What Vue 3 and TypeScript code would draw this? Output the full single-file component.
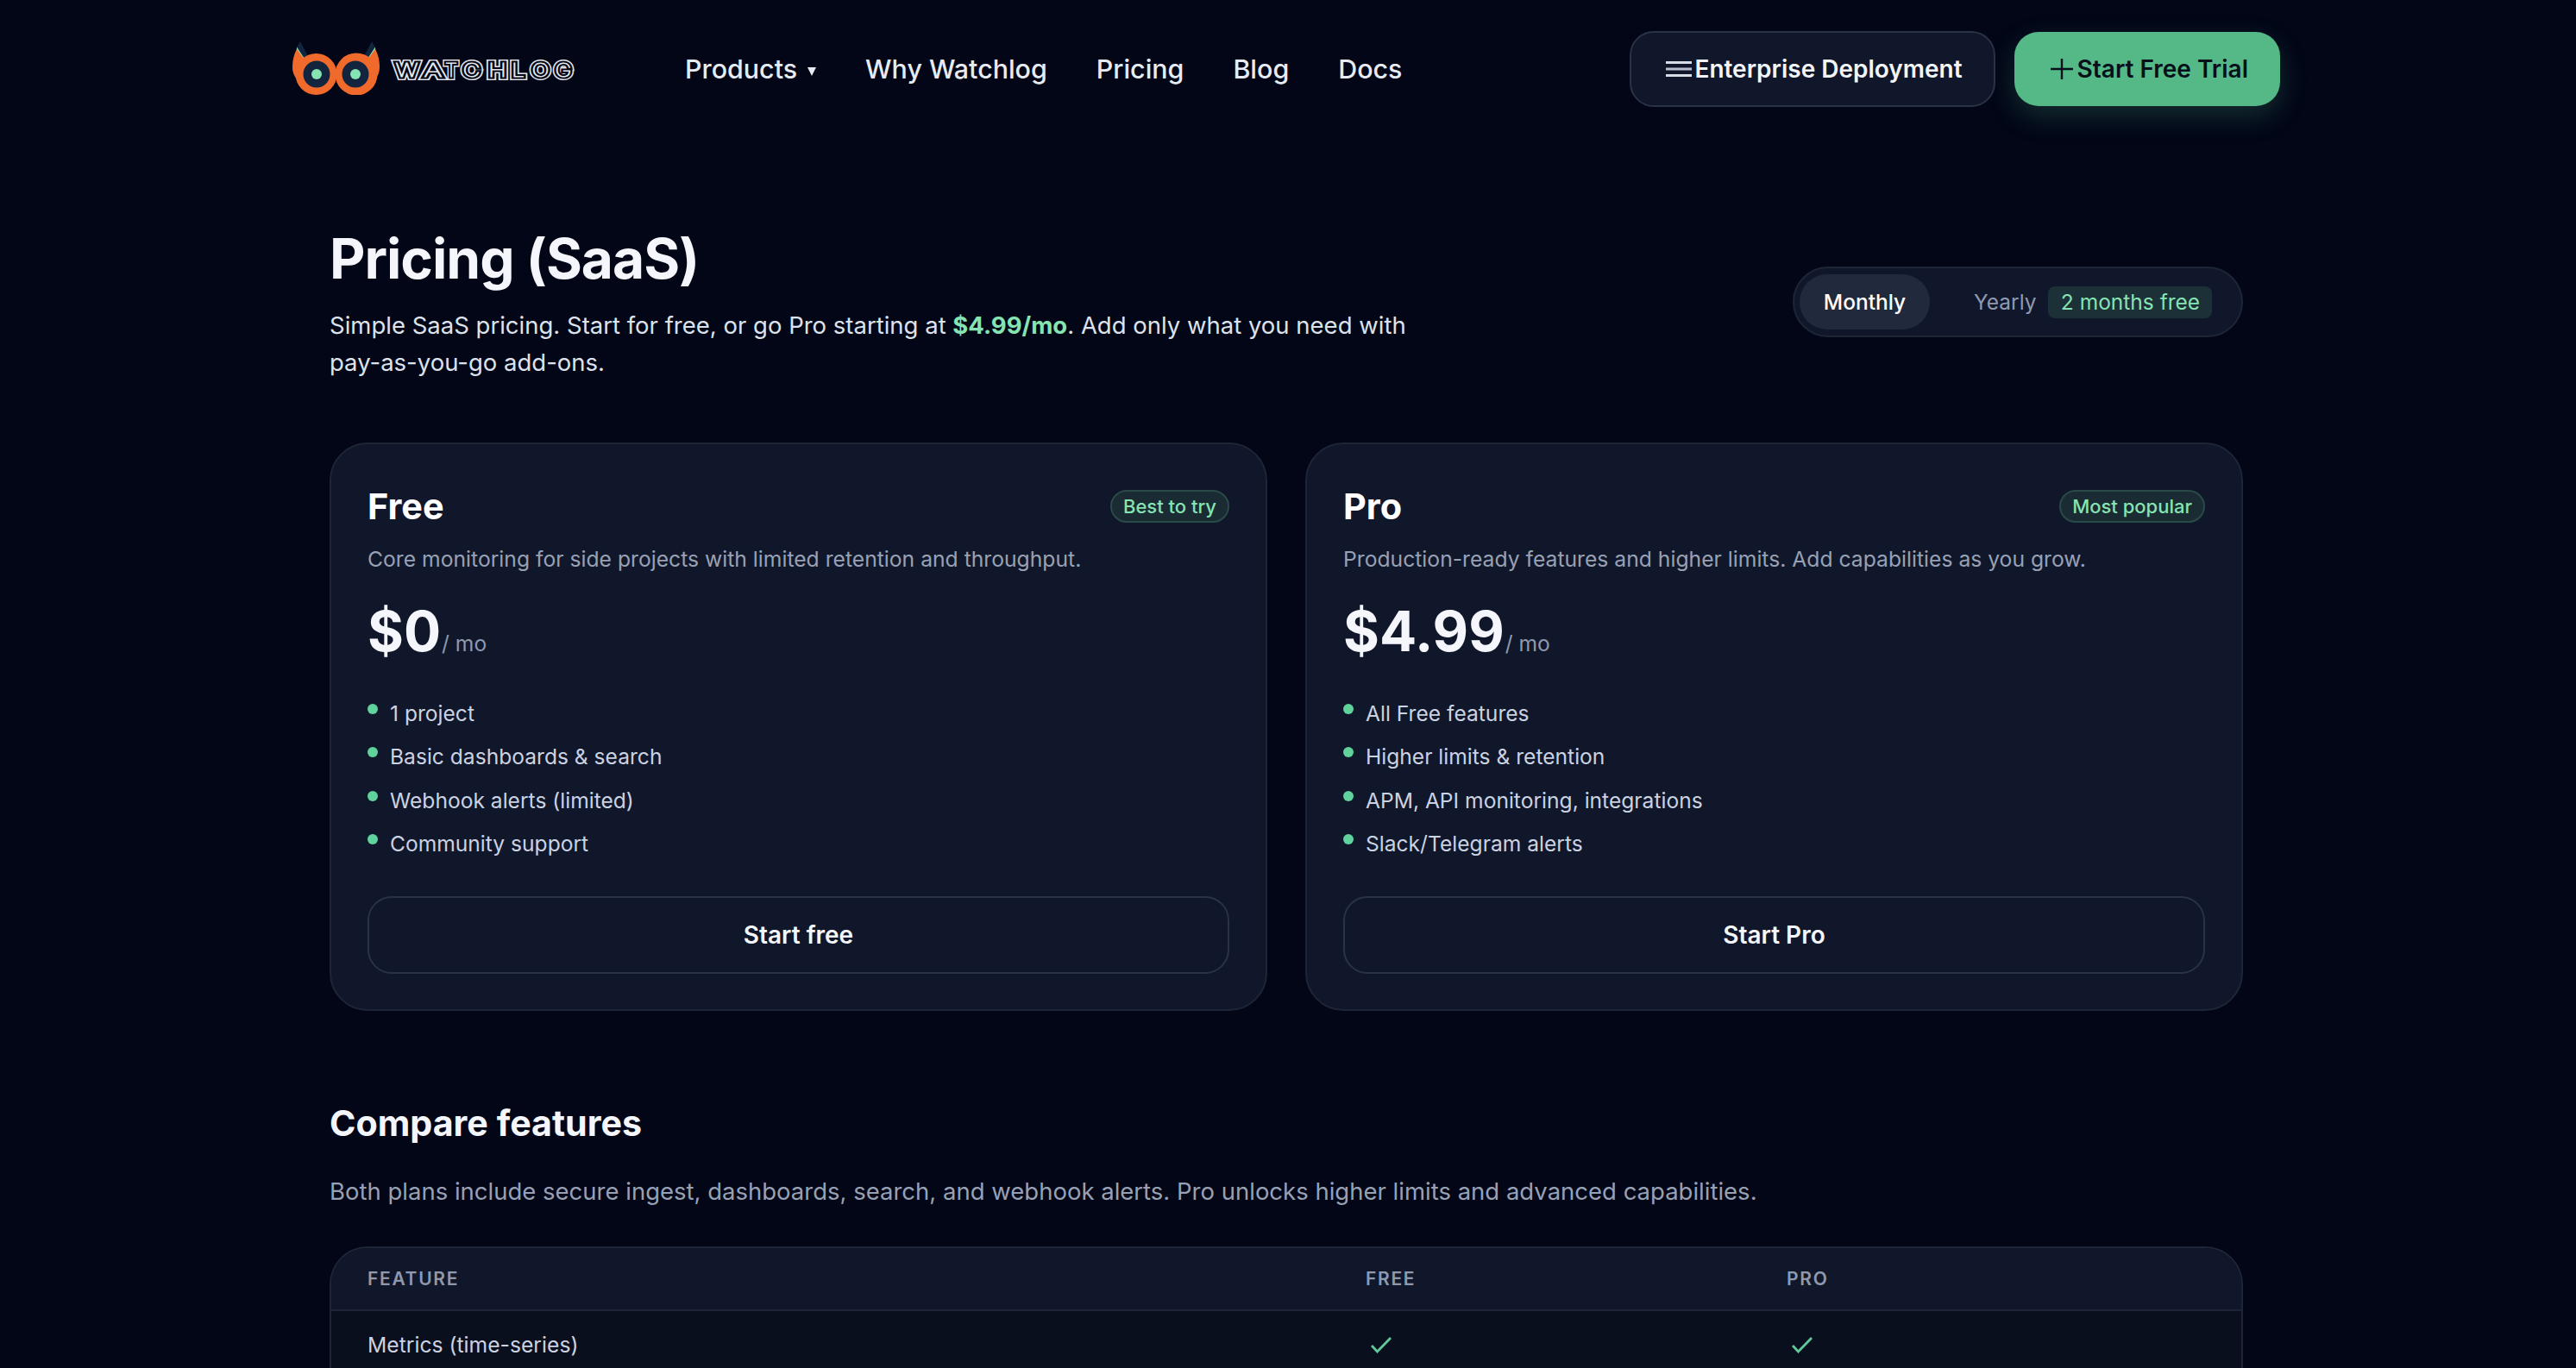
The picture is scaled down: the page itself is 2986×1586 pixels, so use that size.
<script setup lang="ts">
const navLinks = ['Why Watchlog', 'Pricing', 'Blog', 'Docs']

interface Plan {
  name: string
  badge: string
  desc: string
  price: string
  features: string[]
  cta: string
}

const plans: Plan[] = [
  {
    name: 'Free',
    badge: 'Best to try',
    desc: 'Core monitoring for side projects with limited retention and throughput.',
    price: '$0',
    features: ['1 project', 'Basic dashboards & search', 'Webhook alerts (limited)', 'Community support'],
    cta: 'Start free',
  },
  {
    name: 'Pro',
    badge: 'Most popular',
    desc: 'Production-ready features and higher limits. Add capabilities as you grow.',
    price: '$4.99',
    features: ['All Free features', 'Higher limits & retention', 'APM, API monitoring, integrations', 'Slack/Telegram alerts'],
    cta: 'Start Pro',
  },
]
</script>

<template>
  <div class="page">
    <header class="header">
      <div class="brand">
        <svg class="owl" viewBox="0 0 101 62" width="101" height="62" aria-hidden="true">
          <path d="M9 0 L18 17 L14 20 L5 7 Z" fill="#12243e" />
          <path d="M92 0 L83 17 L87 20 L96 7 Z" fill="#12243e" />
          <path d="M5 6.5 L14 20 L4 26 Z" fill="#86e3b2" />
          <path d="M96 6.5 L87 20 L97 26 Z" fill="#86e3b2" />
          <path d="M5 9 C1 16 0 24 0 30 C0 36 2 40 5 44 L14 21 Z" fill="#f06a2b" />
          <path d="M96 9 C100 16 101 24 101 30 C101 36 99 40 96 44 L87 21 Z" fill="#f06a2b" />
          <circle cx="27.5" cy="38" r="24" fill="#f06a2b" />
          <circle cx="74" cy="38" r="24.5" fill="#f06a2b" />
          <circle cx="28" cy="38" r="15.5" fill="#12243e" />
          <circle cx="73" cy="38" r="15.5" fill="#12243e" />
          <circle cx="28" cy="38" r="6" fill="#86e3b2" />
          <circle cx="73" cy="38" r="6" fill="#86e3b2" />
        </svg>
        <svg class="wordmark" viewBox="0 0 210 30" width="210" height="30" role="img" aria-label="Watchlog">
          <defs>
            <text id="wl" y="22.3" class="wm-text"><tspan x="4.5" textLength="26" lengthAdjust="spacingAndGlyphs">W</tspan><tspan x="37.5" textLength="21" lengthAdjust="spacingAndGlyphs">A</tspan><tspan x="62" textLength="14" lengthAdjust="spacingAndGlyphs">T</tspan><tspan x="82.5" textLength="20" lengthAdjust="spacingAndGlyphs">C</tspan><tspan x="112" textLength="21" lengthAdjust="spacingAndGlyphs">H</tspan><tspan x="139" textLength="15" lengthAdjust="spacingAndGlyphs">L</tspan><tspan x="162.5" textLength="20" lengthAdjust="spacingAndGlyphs">O</tspan><tspan x="189.5" textLength="19" lengthAdjust="spacingAndGlyphs">G</tspan></text>
          </defs>
          <use href="#wl" fill="none" stroke="#e4e6eb" stroke-width="8" />
          <use href="#wl" fill="none" stroke="#020617" stroke-width="5.2" />
          <use href="#wl" fill="#e4e6eb" stroke="#e4e6eb" stroke-width="1" />
        </svg>
      </div>
      <nav class="nav">
        <a class="nav-link">Products<svg class="caret" viewBox="0 0 10 10" width="10" height="10" aria-hidden="true"><path d="M0 0H10L5 10Z" fill="#e7ebf3" /></svg></a>
        <a v-for="link in navLinks" :key="link" class="nav-link">{{ link }}</a>
      </nav>
      <div class="actions">
        <button class="btn btn-ghost">
          <svg viewBox="0 0 30 18" width="30" height="18" aria-hidden="true">
            <path d="M0 1.5H30M0 16.5H30" stroke="#d8dce6" stroke-width="3" fill="none" />
            <path d="M0 9H30" stroke="#b9bfcd" stroke-width="3" fill="none" />
          </svg>
          Enterprise Deployment
        </button>
        <button class="btn btn-primary">
          <svg viewBox="0 0 26 24" width="26" height="24" aria-hidden="true">
            <path d="M0 12H26M13 0V24" stroke="#06101a" stroke-width="2.4" fill="none" />
          </svg>
          Start Free Trial
        </button>
      </div>
    </header>

    <main class="main">
      <section class="hero">
        <div class="hero-copy">
          <h1 class="title">Pricing (SaaS)</h1>
          <p class="lead">
            Simple SaaS pricing. Start for free, or go Pro starting at <strong class="accent">$4.99/mo</strong>. Add only what you need with pay-as-you-go add-ons.
          </p>
        </div>
        <div class="toggle">
          <span class="toggle-on">Monthly</span>
          <span class="toggle-off">Yearly</span>
          <span class="toggle-tag">2 months free</span>
        </div>
      </section>

      <section class="plans">
        <article v-for="plan in plans" :key="plan.name" class="card">
          <div class="card-head">
            <h2 class="card-name">{{ plan.name }}</h2>
            <span class="card-badge">{{ plan.badge }}</span>
          </div>
          <p class="card-desc">{{ plan.desc }}</p>
          <div class="price-row">
            <span class="price">{{ plan.price }}</span>
            <span class="per">/ mo</span>
          </div>
          <ul class="features">
            <li v-for="f in plan.features" :key="f" class="feature"><i class="dot"></i>{{ f }}</li>
          </ul>
          <button class="cta">{{ plan.cta }}</button>
        </article>
      </section>

      <section class="compare">
        <h2 class="compare-title">Compare features</h2>
        <p class="compare-sub">Both plans include secure ingest, dashboards, search, and webhook alerts. Pro unlocks higher limits and advanced capabilities.</p>
        <div class="table">
          <div class="row row-head">
            <span>FEATURE</span>
            <span>FREE</span>
            <span>PRO</span>
          </div>
          <div class="row row-body">
            <span class="row-name">Metrics (time-series)</span>
            <svg class="check" viewBox="0 0 26 20" width="26" height="20" aria-hidden="true"><path d="M3 11 L9.5 18 L25 2" fill="none" stroke="#5fc99a" stroke-width="2.8" /></svg>
            <svg class="check" viewBox="0 0 26 20" width="26" height="20" aria-hidden="true"><path d="M3 11 L9.5 18 L25 2" fill="none" stroke="#5fc99a" stroke-width="2.8" /></svg>
          </div>
        </div>
      </section>
    </main>
  </div>
</template>

<style>
html, body { margin: 0; background: #020617; }
</style>

<style scoped>
.page {
  width: 2981px;
  height: 1586px;
  overflow: hidden;
  background: #020617;
  color: #f1f5f9;
  font-family: Inter, "Liberation Sans", sans-serif;
}
.header {
  width: 2305px;
  margin: 0 auto;
  height: 160px;
  padding-top: 36px;
  box-sizing: border-box;
  display: flex;
  align-items: flex-start;
}
.brand {
  display: flex;
  align-items: flex-start;
  gap: 14px;
  margin-top: 12px;
  padding-left: 1px;
  width: 455px;
}
.owl { display: block; flex: none; }
.wordmark { display: block; flex: none; margin-top: 19px; overflow: visible; }
.wm-text {
  font-family: Inter, sans-serif;
  font-size: 22px;
  font-weight: 100;
  stroke-linejoin: miter;
  stroke-miterlimit: 2;
}
.nav {
  display: flex;
  gap: 57px;
  height: 88px;
  align-items: center;
  flex: 1;
}
.nav-link {
  display: flex;
  align-items: center;
  font-size: 30.4px;
  font-weight: 500;
  color: #e7ebf3;
  white-space: nowrap;
}
.caret { margin: 6px 0 0 12px; flex: none; }
.actions { display: flex; align-items: center; gap: 22px; height: 88px; }
.btn {
  display: flex;
  align-items: center;
  gap: 5px;
  font-family: inherit;
  font-size: 28px;
  font-weight: 600;
  border-radius: 28px;
  white-space: nowrap;
}
.btn-ghost {
  height: 88px;
  gap: 3px;
  padding: 0 36px 0 40px;
  color: #f1f5f9;
  background: #11172a;
  border: 2px solid #2a3245;
}
.btn-primary {
  height: 86px;
  padding: 0 37px 0 42px;
  color: #06101a;
  background: #55b887;
  border: none;
  box-shadow: 0 12px 32px rgba(85, 184, 135, 0.22);
}
.main {
  width: 2218px;
  margin-left: 382px;
}
.hero {
  display: flex;
  justify-content: space-between;
  align-items: flex-start;
  height: 353px;
  padding-top: 100px;
  box-sizing: border-box;
}
.hero-copy { width: 1270px; }
.title {
  margin: 0;
  font-size: 64px;
  line-height: 80px;
  font-weight: 700;
  letter-spacing: -1px;
  color: #f4f6fb;
}
.lead {
  margin: 15.5px 0 0;
  font-size: 27.5px;
  line-height: 43px;
  color: #dde2ec;
}
.accent { color: #86e3b2; font-weight: 700; }
.toggle {
  display: flex;
  align-items: center;
  width: 522px;
  height: 82px;
  box-sizing: border-box;
  border: 2px solid #1d2536;
  border-radius: 41px;
  background: #11172a;
  padding: 0 8px 0 6px;
  margin-top: 49px;
  font-size: 24.5px;
}
.toggle-on {
  width: 151px;
  height: 64px;
  line-height: 64px;
  text-align: center;
  border-radius: 32px;
  background: #212a3c;
  font-weight: 500;
  color: #fff;
}
.toggle-off { margin-left: 51px; color: #8f99ae; font-weight: 400; }
.toggle-tag {
  margin-left: 14px;
  width: 190px;
  height: 37px;
  line-height: 37px;
  text-align: center;
  border-radius: 8px;
  background: #1c3037;
  color: #86e3b2;
}
.plans {
  display: grid;
  grid-template-columns: 1087px 1087px;
  justify-content: space-between;
}
.card {
  height: 659px;
  box-sizing: border-box;
  padding: 0 42px;
  background: #11172a;
  border: 2px solid #1d2536;
  border-radius: 44px;
}
.card-head {
  display: flex;
  justify-content: space-between;
  align-items: center;
  height: 76px;
  margin-top: 34px;
}
.card-name { margin: 0; font-size: 41.4px; line-height: 76px; font-weight: 700; color: #fff; }
.card-badge {
  height: 38px;
  box-sizing: border-box;
  line-height: 34px;
  padding: 0 13px;
  border: 2px solid #2a4a48;
  border-radius: 19px;
  background: #1a2b33;
  color: #86e3b2;
  font-size: 22px;
  font-weight: 500;
}
.card-desc {
  margin: 3px 0 0;
  font-size: 24.7px;
  line-height: 40px;
  color: #98a1b4;
}
.price-row { display: flex; align-items: baseline; height: 84px; margin-top: 22px; }
.price { font-size: 64px; line-height: 84px; font-weight: 700; color: #f4f6fb; }
.per { font-size: 24.6px; color: #8f99ae; margin-left: 1px; }
.features {
  list-style: none;
  margin: 28px 0 0;
  padding: 0;
}
.feature {
  position: relative;
  height: 50.4px;
  line-height: 50.4px;
  padding-left: 26px;
  font-size: 24.6px;
  color: #cbd2e1;
}
.dot {
  position: absolute;
  left: 0;
  top: 14px;
  width: 12px;
  height: 12px;
  border-radius: 50%;
  background: #60d29b;
}
.cta {
  display: block;
  width: 100%;
  height: 90px;
  margin-top: 35px;
  font-family: inherit;
  font-size: 28px;
  font-weight: 600;
  color: #f4f6fb;
  background: transparent;
  border: 2px solid #2a3245;
  border-radius: 28px;
}
.compare-title {
  margin: 102px 0 0;
  font-size: 41.2px;
  line-height: 56px;
  font-weight: 700;
  color: #f4f6fb;
}
.compare-sub {
  margin: 29px 0 0;
  font-size: 27.5px;
  line-height: 44px;
  color: #98a1b4;
}
.table {
  margin-top: 42px;
  border: 2px solid #1d2536;
  border-bottom: none;
  border-radius: 44px 44px 0 0;
  overflow: hidden;
  background: #0a0f1e;
}
.row {
  display: grid;
  grid-template-columns: 1157px 488px 1fr;
  padding-left: 42px;
  align-items: center;
}
.row-head {
  height: 71px;
  background: #11172a;
  border-bottom: 2px solid #1d2536;
  font-size: 21px;
  font-weight: 600;
  letter-spacing: 1.7px;
  color: #8f99ae;
}
.row-body { height: 78px; font-size: 24.7px; color: #cbd2e1; }
.check { display: block; margin-left: 4px; }
</style>
